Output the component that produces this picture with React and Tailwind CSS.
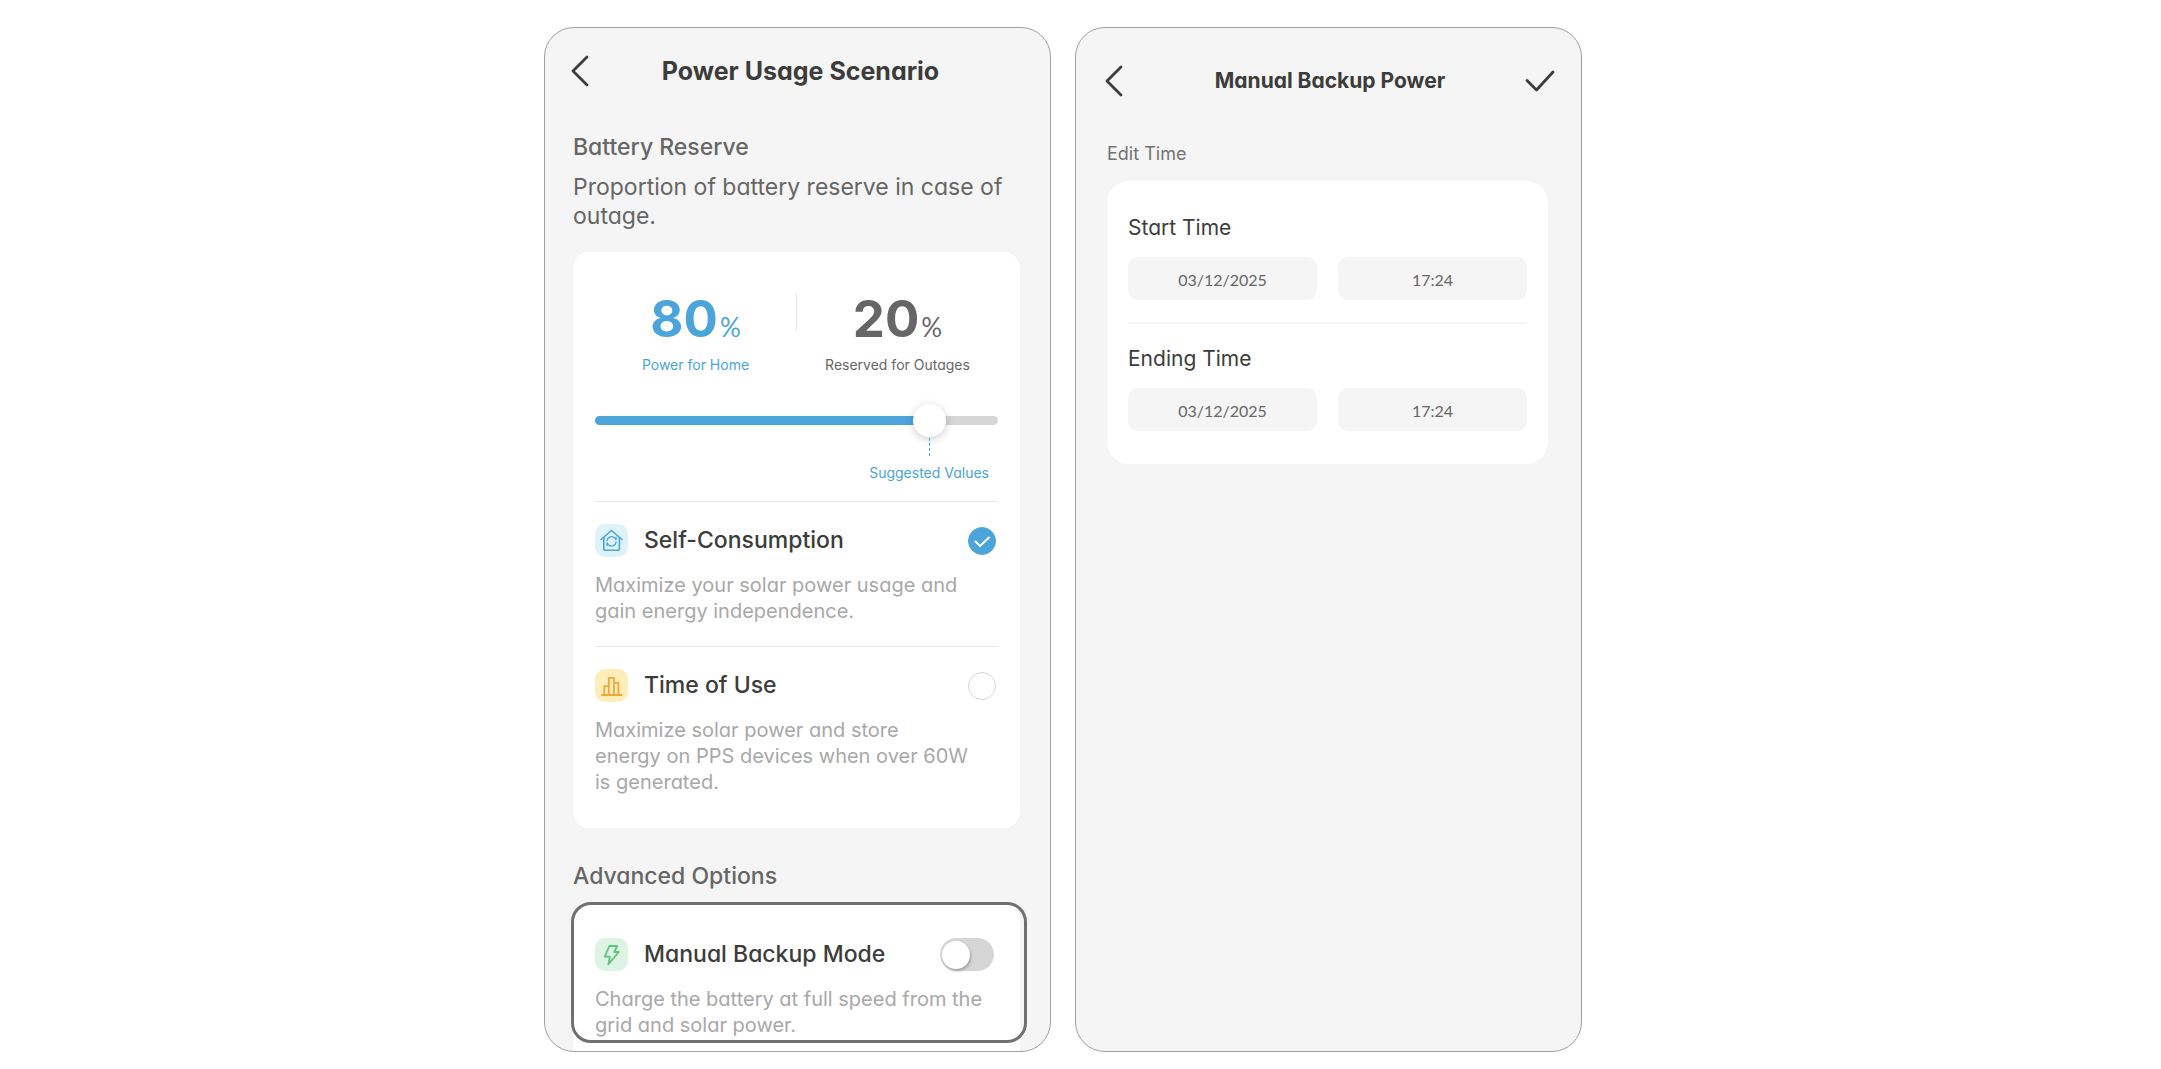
import React, { useState } from 'react';

const options = [
  {
    id: 'self',
    title: 'Self-Consumption',
    text: 'Maximize your solar power usage and\ngain energy independence.',
    badge: 'bg-[#def2fa] text-[#4ba5da]',
    Icon: HouseIcon,
  },
  {
    id: 'tou',
    title: 'Time of Use',
    text: 'Maximize solar power and store\nenergy on PPS devices when over 60W\nis generated.',
    badge: 'bg-[#fdedb8] text-[#f2a83c]',
    Icon: BarsIcon,
  },
];

function HouseIcon() {
  return (
    <svg className="h-[33px] w-[33px]" viewBox="0 0 33 33" fill="none" stroke="currentColor" strokeWidth="1.6" strokeLinecap="round" strokeLinejoin="round">
      <path d="M6 15.5L16.5 6.5L27 15.5" />
      <path d="M8.8 13.5V24.5Q8.8 26.3 10.6 26.3H22.6Q24.4 26.3 24.4 24.5V13.5" />
      <path strokeWidth="1.3" d="M12 16.6A4.6 4.6 0 0 1 20 14.2L21 15.6M21.1 13.2V15.7M21.1 18.1A4.6 4.6 0 0 1 13.1 20.5L12 19M12 21.4V19" />
    </svg>
  );
}

function BarsIcon() {
  return (
    <svg className="h-[33px] w-[33px]" viewBox="0 0 33 33" fill="none" stroke="currentColor" strokeWidth="1.8" strokeLinecap="round" strokeLinejoin="round">
      <path d="M7 26H26.5" />
      <path d="M9.3 26V17.2H13.8M13.8 26V8.8H19V26M19 13.8H23.4V26" />
    </svg>
  );
}

function BoltIcon() {
  return (
    <svg className="h-[33px] w-[33px]" viewBox="0 0 33 33" fill="none" stroke="currentColor" strokeWidth="1.8" strokeLinecap="round" strokeLinejoin="round">
      <path d="M14.3 8H22.2L19.2 14H23.8L13.4 26.2L14.9 18.6H9.8Z" />
    </svg>
  );
}

function BackButton() {
  return (
    <button type="button" aria-label="Back" className="justify-self-start">
      <svg className="h-8 w-[18px]" viewBox="0 0 18 32" fill="none" stroke="#3c3c3b" strokeWidth="2.8" strokeLinecap="round" strokeLinejoin="round">
        <path d="M16 2L2 16L16 30" />
      </svg>
    </button>
  );
}

function Badge({ className, children }) {
  return <span className={`h-[33px] w-[33px] shrink-0 rounded-[10px] ${className}`}>{children}</span>;
}

function Option({ option, checked, onSelect }) {
  const { Icon } = option;
  return (
    <div className="border-t border-[#e6e6e6] pt-[22px] pb-[22px]">
      <label className="flex items-center">
        <Badge className={option.badge}>
          <Icon />
        </Badge>
        <span className="ml-4 flex-1 text-[23px] leading-[33px] font-medium text-[#3c3c3b]">{option.title}</span>
        <span className="mr-[2px] grid place-items-center">
          <input
            type="radio"
            name="scenario"
            checked={checked}
            onChange={onSelect}
            className="col-start-1 row-start-1 h-7 w-7 appearance-none rounded-full border border-[#d6d6d6] bg-white checked:border-[#4ba5da] checked:bg-[#4ba5da]"
          />
          {checked && (
            <svg className="pointer-events-none col-start-1 row-start-1 h-7 w-7" viewBox="0 0 28 28" fill="none" stroke="white" strokeWidth="2" strokeLinecap="round" strokeLinejoin="round">
              <path d="M7.5 14.5L12 19L21 10.5" />
            </svg>
          )}
        </span>
      </label>
      <p className="mt-[15px] text-[20px] leading-[26px] whitespace-pre-line text-[#a8a8a8]">{option.text}</p>
    </div>
  );
}

function Stat({ value, label, className }) {
  return (
    <div className={`text-center ${className}`}>
      <p className="text-[51px] leading-[52px] font-bold">
        {value}
        <span className="ml-[2px] font-[Lato,sans-serif] text-[26px] leading-none font-normal">%</span>
      </p>
      <p className="mt-[10px] text-[14px] leading-5">{label}</p>
    </div>
  );
}

function TimeField({ title, date, time }) {
  const box =
    'h-[43px] w-full min-w-0 rounded-[10px] bg-[#f5f5f5] pt-[2px] text-center font-[Lato,sans-serif] text-[16px] text-[#666666] focus:outline-none';
  return (
    <fieldset>
      <legend className="text-[21px] leading-7 text-[#3c3c3b]">{title}</legend>
      <div className="mt-[15px] grid grid-cols-2 gap-[21px]">
        <input type="text" aria-label={`${title} date`} defaultValue={date} className={box} />
        <input type="text" aria-label={`${title} hour`} defaultValue={time} className={box} />
      </div>
    </fieldset>
  );
}

function ScenarioScreen() {
  const [home, setHome] = useState(80);
  const [selected, setSelected] = useState('self');
  const [backup, setBackup] = useState(false);
  const max = 93;

  return (
    <section className="overflow-hidden rounded-[30px] border border-[#a0a0a0] bg-[#f5f5f5]">
      <header className="grid grid-cols-[1fr_auto_1fr] items-center pt-[27px] pr-[20px] pl-[26px]">
        <BackButton />
        <h1 className="text-[25px] leading-8 font-bold text-[#3c3c3b]">Power Usage Scenario</h1>
      </header>

      <div className="pr-[30px] pl-7">
        <h2 className="mt-[46px] text-[23px] leading-7 font-medium text-[#666666]">Battery Reserve</h2>
        <p className="mt-3 text-[23px] leading-[29px] text-[#666666]">
          Proportion of battery reserve in case of outage.
        </p>

        <div className="mt-[21px] rounded-2xl bg-white px-[22px] pt-[41px] pb-[11px]">
          <div className="flex">
            <Stat value={home} label="Power for Home" className="flex-1 text-[#4ba5da]" />
            <div className="h-[38px] w-px bg-[#e6e6e6]" />
            <Stat value={100 - home} label="Reserved for Outages" className="flex-1 text-[#666666]" />
          </div>

          {/* Reserve slider */}
          <input
            type="range"
            min="0"
            max={max}
            value={home}
            onChange={(e) => setHome(Number(e.target.value))}
            aria-label="Power for Home"
            style={{ '--fill': `${(home / max) * 100}%` }}
            className="mt-7 block h-[34px] w-full appearance-none bg-transparent [&::-webkit-slider-runnable-track]:h-[9px] [&::-webkit-slider-runnable-track]:rounded-full [&::-webkit-slider-runnable-track]:bg-[linear-gradient(to_right,#4ba5da_var(--fill),#d6d6d6_var(--fill))] [&::-webkit-slider-thumb]:-mt-3 [&::-webkit-slider-thumb]:h-[33px] [&::-webkit-slider-thumb]:w-[33px] [&::-webkit-slider-thumb]:appearance-none [&::-webkit-slider-thumb]:rounded-full [&::-webkit-slider-thumb]:bg-white [&::-webkit-slider-thumb]:shadow-[0_2px_8px_rgba(0,0,0,0.2)]"
          />
          <div className="mr-[9px] flex flex-col items-end pb-[18px] text-[#4ba5da]">
            <div className="flex flex-col items-center">
              <div className="mt-px h-[18px] border-l border-dashed border-[#4ba5da]" />
              <p className="mt-[7px] text-[14px] leading-5">Suggested Values</p>
            </div>
          </div>

          {options.map((option) => (
            <Option
              key={option.id}
              option={option}
              checked={selected === option.id}
              onSelect={() => setSelected(option.id)}
            />
          ))}
        </div>

        <h2 className="mt-[34px] text-[23px] leading-7 font-medium text-[#666666]">Advanced Options</h2>

        {/* Highlighted card */}
        <div className="mt-[14px] rounded-t-2xl bg-white pb-2">
          <div className="-mt-[2px] -mr-[7px] -ml-[2px] rounded-[20px] border-3 border-[#707070] pt-[33px] pr-[22px] pb-[2px] pl-[21px]">
            <label className="flex items-center">
              <Badge className="bg-[#ddf3e4] text-[#5fc481]">
                <BoltIcon />
              </Badge>
              <span className="ml-4 flex-1 text-[23px] leading-[33px] font-medium text-[#3c3c3b]">Manual Backup Mode</span>
              <input
                type="checkbox"
                role="switch"
                checked={backup}
                onChange={() => setBackup(!backup)}
                className="mr-2 flex h-[33px] w-[54px] appearance-none items-center rounded-full bg-[#d6d6d6] px-[2px] before:h-7 before:w-7 before:rounded-full before:bg-white before:shadow-[1px_2px_3px_rgba(0,0,0,0.25)] checked:justify-end checked:bg-[#4ba5da]"
              />
            </label>
            <p className="mt-[15px] text-[20px] leading-[26px] text-[#a8a8a8]">
              Charge the battery at full speed from the grid and solar power.
            </p>
          </div>
        </div>
      </div>
    </section>
  );
}

function BackupScreen() {
  return (
    <section className="rounded-[30px] border border-[#a0a0a0] bg-[#f5f5f5]">
      <header className="grid grid-cols-[1fr_auto_1fr] items-center pt-[37px] pr-[26px] pl-[29px]">
        <BackButton />
        <h1 className="text-[21px] leading-8 font-bold text-[#3c3c3b]">Manual Backup Power</h1>
        <button type="button" aria-label="Save" className="justify-self-end">
          <svg className="h-6 w-[30px]" viewBox="0 0 30 24" fill="none" stroke="#3c3c3b" strokeWidth="2.8" strokeLinecap="round" strokeLinejoin="round">
            <path d="M2 11.5L11.5 21L28 3" />
          </svg>
        </button>
      </header>

      <div className="pr-[33px] pl-[31px]">
        <h2 className="mt-11 text-[18px] leading-[26px] text-[#737373]">Edit Time</h2>
        <form className="mt-[14px] rounded-[22px] bg-white px-[21px] py-[33px]">
          <TimeField title="Start Time" date="03/12/2025" time="17:24" />
          <div className="mt-[22px] mb-[21px] h-[2px] bg-[#f5f5f5]" />
          <TimeField title="Ending Time" date="03/12/2025" time="17:24" />
        </form>
      </div>
    </section>
  );
}

export default function App() {
  return (
    <main className="flex min-h-screen items-start justify-center bg-white pt-[27px] pr-[35px] pb-[18px] font-[Inter,sans-serif] [font-feature-settings:'cv11']">
      <div className="grid w-full max-w-[1038px] grid-cols-2 gap-6">
        <ScenarioScreen />
        <BackupScreen />
      </div>
    </main>
  );
}
